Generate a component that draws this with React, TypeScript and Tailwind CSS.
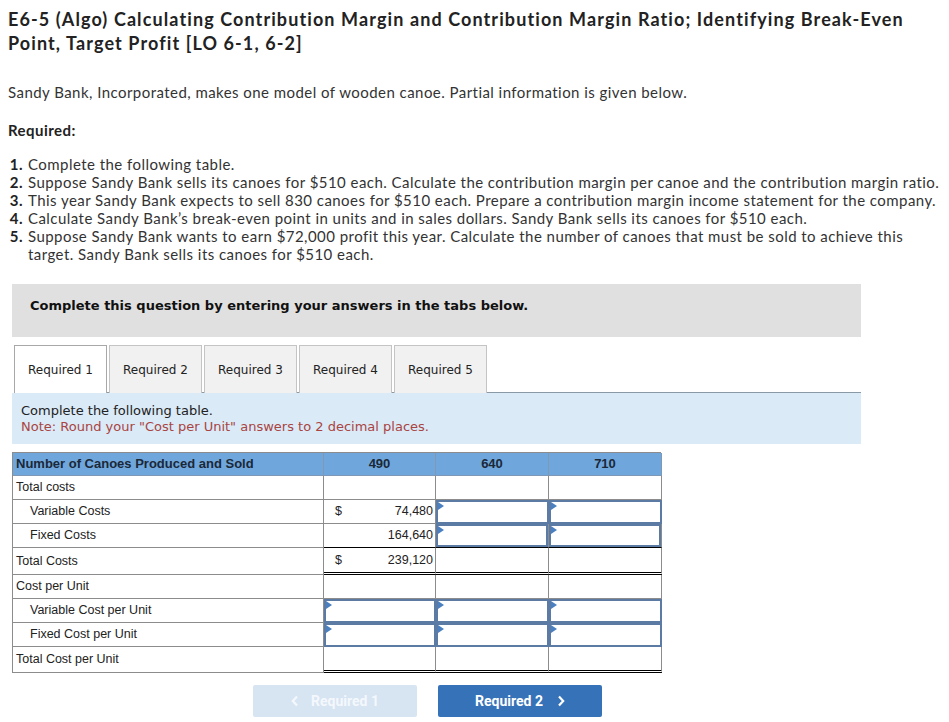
import React from 'react';

const items: { n: string; text: string }[] = [
  { n: '1.', text: 'Complete the following table.' },
  { n: '2.', text: 'Suppose Sandy Bank sells its canoes for $510 each. Calculate the contribution margin per canoe and the contribution margin ratio.' },
  { n: '3.', text: 'This year Sandy Bank expects to sell 830 canoes for $510 each. Prepare a contribution margin income statement for the company.' },
  { n: '4.', text: 'Calculate Sandy Bank\u2019s break-even point in units and in sales dollars. Sandy Bank sells its canoes for $510 each.' },
  { n: '5.', text: 'Suppose Sandy Bank wants to earn $72,000 profit this year. Calculate the number of canoes that must be sold to achieve this target. Sandy Bank sells its canoes for $510 each.' },
];

const tabs = ['Required 1', 'Required 2', 'Required 3', 'Required 4', 'Required 5'];

const InputCell: React.FC<{ bottom?: string }> = ({ bottom = '' }) => (
  <div className={`relative h-full border-2 border-[#5b7ba4] bg-white ${bottom}`}>
    <span className="absolute left-0 top-0 h-0 w-0 border-y-[4px] border-l-[6px] border-y-transparent border-l-[#4a7fc0]" />
  </div>
);

const Label: React.FC<{ children: React.ReactNode; indent?: boolean; bottom?: string }> = ({ children, indent, bottom = 'border-b border-[#8c8c8c]' }) => (
  <div className={`flex items-center border-r border-[#8c8c8c] ${bottom} ${indent ? 'pl-[17px]' : 'pl-[3px]'}`}>{children}</div>
);

const Cell: React.FC<{ dollar?: boolean; value?: string; cls?: string }> = ({ dollar, value, cls = 'border-b border-[#8c8c8c]' }) => (
  <div className={`flex items-center justify-between border-r border-[#8c8c8c] pl-[11px] pr-[2px] ${cls}`}>
    <span>{dollar ? '$' : ''}</span>
    <span>{value ?? ''}</span>
  </div>
);

export default function App() {
  return (
    <div className="min-h-[722px] w-[949px] bg-white pl-[8px] text-[#333]" style={{ fontFamily: 'Lato, "Open Sans", sans-serif' }}>
      <h1 className="pt-[7px] text-[18px] font-bold leading-[24px] tracking-[1.1px] text-[#222]">
        E6-5 (Algo) Calculating Contribution Margin and Contribution Margin Ratio; Identifying Break-Even Point, Target Profit [LO 6-1, 6-2]
      </h1>

      <p className="mt-[28px] text-[15px] leading-[18px] tracking-[0.45px]">Sandy Bank, Incorporated, makes one model of wooden canoe. Partial information is given below.</p>

      <p className="mt-[20px] text-[15px] font-bold leading-[18px] tracking-[0.45px] text-[#222]">Required:</p>

      <ol className="mt-[16px] text-[15px] leading-[18px] tracking-[0.45px]">
        {items.map((it) => (
          <li key={it.n} className="flex">
            <span className="w-[20px] shrink-0 pr-[5px] text-right font-bold text-[#222]">{it.n}</span>
            <span>{it.text}</span>
          </li>
        ))}
      </ol>

      <div style={{ fontFamily: '"DejaVu Sans", Verdana, sans-serif' }}>
        <div className="ml-[4px] mt-[21px] h-[53px] w-[849px] bg-[#e0e0e0] pl-[18px] pt-[14px] text-[13px] font-bold leading-[15px] text-[#111]">
          Complete this question by entering your answers in the tabs below.
        </div>

        <div className="ml-[6px] mt-[8px] flex w-[847px] gap-[2px] border-b border-[#8a99a6]">
          {tabs.map((t, i) => (
            <div
              key={t}
              className={`-mb-px flex h-[48px] w-[93px] items-center justify-center border border-b-0 text-[12px] text-[#222] ${
                i === 0 ? 'border-[#a8a8a8] bg-white' : 'border-[#c4c4c4] bg-[#f1f1f1] border-b border-b-[#8a99a6]'
              }`}
            >
              {t}
            </div>
          ))}
        </div>

        <div className="ml-[4px] flex h-[51px] w-[849px] flex-col justify-center bg-[#dbeaf7] pl-[9px] text-[13px] leading-[16px]">
          <span className="text-[#222]">Complete the following table.</span>
          <span className="text-[#a94442]">Note: Round your "Cost per Unit" answers to 2 decimal places.</span>
        </div>
      </div>

      <div
        className="ml-[4px] mt-[8px] grid w-[649px] grid-cols-[311px_112px_113px_113px] border-l border-t border-[#8c8c8c] text-[12.5px] text-[#222]"
        style={{ fontFamily: '"Liberation Sans", Arial, sans-serif', gridTemplateRows: '23px 24px 24px 24px 27px 24px 24px 24px 26px' }}
      >
        <div className="flex items-center border-b border-r border-[#7f98b5] bg-[#6fa7dc] pl-[3px] text-[13px] font-bold text-[#1b2838]">Number of Canoes Produced and Sold</div>
        {['490', '640', '710'].map((h) => (
          <div key={h} className="flex items-center justify-center border-b border-r border-[#7f98b5] bg-[#6fa7dc] text-[13px] font-bold text-[#1b2838]">{h}</div>
        ))}

        <Label>Total costs</Label>
        <Cell />
        <Cell />
        <Cell />

        <Label indent>Variable Costs</Label>
        <Cell dollar value="74,480" />
        <InputCell />
        <InputCell />

        <Label indent>Fixed Costs</Label>
        <Cell value="164,640" cls="border-b border-b-black" />
        <div className="border-b border-r border-b-black border-r-[#8c8c8c]"><InputCell /></div>
        <div className="border-b border-r border-b-black border-r-[#8c8c8c]"><InputCell /></div>

        <Label>Total Costs</Label>
        <Cell dollar value="239,120" cls="border-b-[3px] border-double border-b-black" />
        <Cell cls="border-b-[3px] border-double border-b-black" />
        <Cell cls="border-b-[3px] border-double border-b-black" />

        <Label>Cost per Unit</Label>
        <Cell />
        <Cell />
        <Cell />

        <Label indent>Variable Cost per Unit</Label>
        <InputCell />
        <InputCell />
        <InputCell />

        <Label indent>Fixed Cost per Unit</Label>
        <InputCell />
        <InputCell />
        <InputCell />

        <Label>Total Cost per Unit</Label>
        <Cell cls="border-b-[3px] border-double border-b-black" />
        <Cell cls="border-b-[3px] border-double border-b-black" />
        <Cell cls="border-b-[3px] border-double border-b-black" />
      </div>

      <div className="ml-[245px] mt-[12px] flex gap-[21px] text-[14px] font-bold text-white" style={{ fontFamily: 'Roboto, sans-serif' }}>
        <div className="flex h-[32px] w-[164px] items-center justify-center gap-[12px] rounded-[2px] bg-[#d7e4f2] text-[#f4f8fc]">
          <svg width="8" height="12" viewBox="0 0 8 12"><path d="M6 1.5 1.8 6 6 10.5" fill="none" stroke="currentColor" strokeWidth="2.2" /></svg>
          <span>Required 1</span>
        </div>
        <div className="flex h-[32px] w-[164px] items-center justify-center gap-[14px] rounded-[2px] bg-[#3572b8]">
          <span>Required 2</span>
          <svg width="8" height="12" viewBox="0 0 8 12"><path d="M2 1.5 6.2 6 2 10.5" fill="none" stroke="currentColor" strokeWidth="2.2" /></svg>
        </div>
      </div>
    </div>
  );
}
